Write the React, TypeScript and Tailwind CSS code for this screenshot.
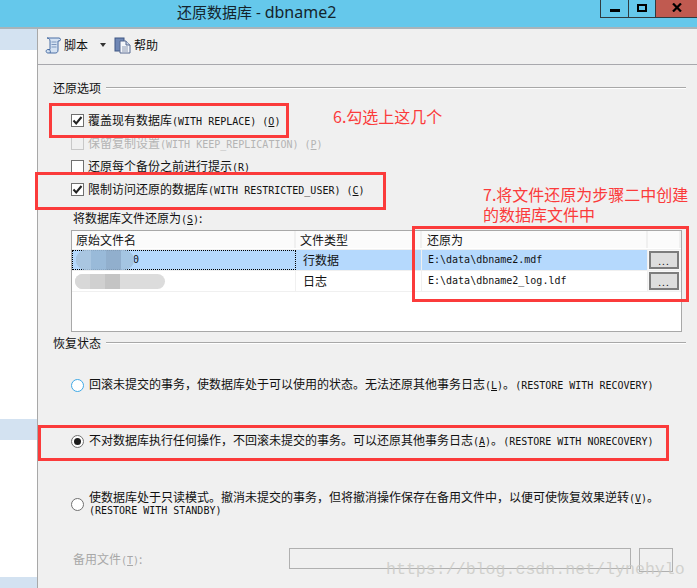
import React from "react";

const mono = "font-['DejaVu_Sans_Mono',monospace] text-[10px]";

const Latin = ({ children }: { children: React.ReactNode }) => (
  <span className={mono}>{children}</span>
);

const Key = ({ children }: { children: React.ReactNode }) => (
  <span className={mono}>
    (<span className="underline">{children}</span>)
  </span>
);

const CheckBox = ({ checked, disabled }: { checked?: boolean; disabled?: boolean }) => (
  <span
    className={`flex h-[13px] w-[13px] shrink-0 items-center justify-center border ${
      disabled ? "border-[#c8c8c8] bg-[#f0f0f0]" : "border-[#707070] bg-white"
    }`}
  >
    {checked && (
      <svg width="11" height="11" viewBox="0 0 11 11">
        <path d="M1.5 5.5 L4.2 8.5 L9.5 2" fill="none" stroke="#222" strokeWidth="2" />
      </svg>
    )}
  </span>
);

const Radio = ({ checked, blue }: { checked?: boolean; blue?: boolean }) => (
  <span
    className={`flex h-[13px] w-[13px] shrink-0 items-center justify-center rounded-full border bg-white ${
      blue ? "border-[#3fa9e6]" : "border-[#707070]"
    }`}
  >
    {checked && <span className="h-[7px] w-[7px] rounded-full bg-[#1c1c1c]" />}
  </span>
);

const SectionHead = ({ title }: { title: string }) => (
  <div className="flex h-4 items-center gap-[5px] pl-[15px] pr-[11px]">
    <span>{title}</span>
    <span className="h-[2px] flex-1 border-t border-b border-t-[#a8a8a8] border-b-white" />
  </div>
);

const OptionRow = ({
  children,
  checked,
  disabled,
}: {
  children: React.ReactNode;
  checked?: boolean;
  disabled?: boolean;
}) => (
  <div className={`flex h-[23px] items-center gap-[4px] pl-[33px] ${disabled ? "text-[#b4b4b4]" : ""}`}>
    <CheckBox checked={checked} disabled={disabled} />
    <span className="whitespace-nowrap">{children}</span>
  </div>
);

const DotsButton = () => (
  <div className="flex h-[18px] w-[30px] items-end justify-center border-2 border-[#7d7d7d] bg-[#dedede] pb-[1px] text-[10px] leading-[10px] tracking-[1px]">
    ...
  </div>
);

const HeaderCell = ({ className, children }: { className: string; children?: React.ReactNode }) => (
  <div className={`flex h-[17px] items-center border-r-2 border-[#f0f0f0] bg-[#fbfbfb] pl-[4px] ${className}`}>
    {children}
  </div>
);

const FileRow = ({
  selected,
  type,
  path,
  blur,
}: {
  selected?: boolean;
  type: string;
  path: string;
  blur: React.ReactNode;
}) => (
  <div className={`flex h-[21px] border-b border-[#f0f0f0] ${selected ? "bg-[#b5d9fd]" : "bg-white"}`}>
    <div
      className={`flex w-[224px] items-center border-r border-[#f0f0f0] pl-[3px] ${
        selected ? "border border-dotted border-black" : ""
      }`}
    >
      {blur}
    </div>
    <div className="flex w-[126px] items-center border-r border-[#f0f0f0] pl-[7px]">{type}</div>
    <div className="flex w-[226px] items-center border-r border-[#f0f0f0] pl-[6px] font-['DejaVu_Sans_Mono',monospace] text-[10px]">
      {path}
    </div>
    <div className="flex flex-1 items-center bg-[#f8f8f8] pl-[1px]">
      <DotsButton />
    </div>
  </div>
);

const ScriptIcon = () => (
  <svg width="17" height="17" viewBox="0 0 17 17">
    <path d="M2 1 H14 C16 1 16 4 14 4 H13 V13 C13 16 11 16 10 16 H3 C0.5 16 0.5 12.5 3 12.5 H5 V4 C5 2 3.5 1 2 1 Z" fill="#d5e2f2" stroke="#4a6fa5" />
    <path d="M6.5 5 H11.5 M6.5 7.5 H11.5 M6.5 10 H11.5" stroke="#7d97bd" />
    <path d="M3 12.5 C5 12.5 6 14.5 5 16" fill="none" stroke="#4a6fa5" />
  </svg>
);

const HelpIcon = () => (
  <svg width="17" height="17" viewBox="0 0 17 17">
    <rect x="1" y="1" width="9" height="13" fill="#6f87b5" stroke="#3f5684" />
    <path d="M6 4 H12 L16 8 V16 H6 Z" fill="#f4f6fa" stroke="#56698f" />
    <path d="M12 4 V8 H16" fill="#c9d4e6" stroke="#56698f" />
    <path d="M8 10 H14 M8 12 H14 M8 14 H14" stroke="#8d9ab3" />
  </svg>
);

const RedBox = ({ className }: { className: string }) => (
  <div className={`pointer-events-none absolute border-[3px] border-[#fb3b3b] ${className}`} />
);

export default function App() {
  return (
    <div className="relative h-[588px] w-[697px] overflow-hidden bg-[#f0f0f0] font-['Noto_Sans_CJK_SC',sans-serif] text-[12px] leading-4 text-[#111]">
      {/* title bar */}
      <div className="flex h-[29px] border-b-2 border-[#a8b4ba] bg-[#65c8eb]">
        <div className="flex-1 pl-[177px] pt-[2px] font-['Noto_Sans','Noto_Sans_CJK_SC',sans-serif] text-[15px] leading-[21px] text-[#14242c]">
          还原数据库 - <span className="text-[16px]">dbname2</span>
        </div>
        <div className="flex h-[18px] items-stretch border-b border-l border-[#2f3b40]">
          <div className="flex w-[28px] items-end justify-center border-r border-[#2f3b40] pb-[5px]">
            <span className="h-[3px] w-[10px] bg-black" />
          </div>
          <div className="flex w-[26px] items-start justify-center pt-[4px]">
            <span className="h-[8px] w-[10px] border-2 border-black" />
          </div>
          <div className="flex w-[42px] items-start justify-center border-l border-[#2f3b40] bg-[#c05a50] pt-[3px]">
            <svg width="10" height="9" viewBox="0 0 10 9">
              <path d="M1 0.5 L9 8.5 M9 0.5 L1 8.5" stroke="#000" strokeWidth="2.2" />
            </svg>
          </div>
        </div>
      </div>

      <div className="flex h-[559px]">
        {/* left pages list */}
        <div className="w-[37px] shrink-0 bg-white">
          <div className="h-[21px] bg-[#d3e2f1]" />
          <div className="mt-[369px] h-[21px] bg-[#d3e2f1]" />
          <div className="mt-[137px] h-[11px] bg-[#d3e2f1]" />
        </div>

        <div className="flex-1 border-l border-[#a8a8a8]">
          {/* toolbar */}
          <div className="flex h-[36px] items-center border-b border-[#a8a8ad] pb-[3px] pl-[7px] text-[12px]">
            <ScriptIcon />
            <span className="ml-[2px]">脚本</span>
            <span className="ml-[12px] h-0 w-0 border-x-[3.5px] border-t-[4px] border-x-transparent border-t-[#333]" />
            <span className="ml-[8px]">
              <HelpIcon />
            </span>
            <span className="ml-[3px]">帮助</span>
          </div>

          <div className="mt-[15px]">
            <SectionHead title="还原选项" />
          </div>
          <div className="mt-[13px]">
            <OptionRow checked>
              覆盖现有数据库<Latin>(WITH REPLACE) </Latin>
              <Key>O</Key>
            </OptionRow>
            <OptionRow disabled>
              保留复制设置<Latin>(WITH KEEP_REPLICATION) </Latin>
              <Key>P</Key>
            </OptionRow>
            <OptionRow>
              还原每个备份之前进行提示<Key>R</Key>
            </OptionRow>
            <OptionRow checked>
              限制访问还原的数据库<Latin>(WITH RESTRICTED_USER) </Latin>
              <Key>C</Key>
            </OptionRow>
          </div>

          <div className="mt-[9px] h-4 pl-[35px]">
            将数据库文件还原为<Key>S</Key>:
          </div>

          {/* file table */}
          <div className="ml-[33px] mt-[4px] h-[102px] w-[611px] border border-[#a8a8a8] bg-white">
            <div className="flex border-b border-[#f0f0f0] pb-[1px]">
              <HeaderCell className="w-[224px]">原始文件名</HeaderCell>
              <HeaderCell className="w-[126px]">文件类型</HeaderCell>
              <HeaderCell className="w-[226px] pl-[5px]">还原为</HeaderCell>
              <HeaderCell className="flex-1" />
            </div>
            <FileRow
              selected
              type="行数据"
              path="E:\data\dbname2.mdf"
              blur={
                <div className="flex w-full items-center">
                  <div className="flex h-[20px] w-[58px] overflow-hidden rounded-full bg-[#a3c3e0] opacity-90">
                    <span className="w-[15px] bg-[#a8c4de]" />
                    <span className="w-[15px] bg-[#97b7d6]" />
                    <span className="w-[15px] bg-[#8eabc8]" />
                  </div>
                  <span className="-ml-[1px] font-['DejaVu_Sans_Mono',monospace] text-[10px]">0</span>
                </div>
              }
            />
            <FileRow
              type="日志"
              path="E:\data\dbname2_log.ldf"
              blur={
                <div className="flex h-[15px] w-[90px] overflow-hidden rounded-full bg-[#dcdcdc]">
                  <span className="w-[15px] bg-[#d8d8d8]" />
                  <span className="w-[15px] bg-[#d0d0d0]" />
                  <span className="w-[15px] bg-[#c4c4c4]" />
                </div>
              }
            />
          </div>

          <div className="mt-[3px]">
            <SectionHead title="恢复状态" />
          </div>

          <div className="mt-[26px] flex h-4 items-center gap-[5px] pl-[33px]">
            <Radio blue />
            <span className="whitespace-nowrap">
              回滚未提交的事务，使数据库处于可以使用的状态。无法还原其他事务日志<Key>L</Key>。
              <Latin>(RESTORE WITH RECOVERY)</Latin>
            </span>
          </div>
          <div className="mt-[40px] flex h-4 items-center gap-[5px] pl-[33px]">
            <Radio checked />
            <span className="whitespace-nowrap">
              不对数据库执行任何操作，不回滚未提交的事务。可以还原其他事务日志<Key>A</Key>。
              <Latin>(RESTORE WITH NORECOVERY)</Latin>
            </span>
          </div>
          <div className="mt-[43px] flex h-6 items-center gap-[5px] pl-[33px]">
            <Radio />
            <div className="whitespace-nowrap leading-3">
              <div>
                使数据库处于只读模式。撤消未提交的事务，但将撤消操作保存在备用文件中，以便可使恢复效果逆转<Key>V</Key>。
              </div>
              <div className={mono}>(RESTORE WITH STANDBY)</div>
            </div>
          </div>

          <div className="mt-[32px] flex items-start pl-[35px] text-[#a8a8a8]">
            <span className="mt-[3px] w-[216px]">
              备用文件<Key>T</Key>:
            </span>
            <div className="h-[21px] w-[342px] border border-[#b0b0b0]" />
            <div className="ml-[8px] h-[24px] w-[34px] border border-[#b0b0b0]" />
          </div>
        </div>
      </div>

      {/* annotations drawn over the dialog */}
      <RedBox className="left-[49px] top-[103px] h-[35px] w-[240px]" />
      <RedBox className="left-[35px] top-[172px] h-[38px] w-[351px]" />
      <RedBox className="left-[412px] top-[226px] h-[76px] w-[277px]" />
      <RedBox className="left-[38px] top-[425px] h-[36px] w-[631px]" />
      <div className="absolute left-[333px] top-[105px] text-[16px] leading-[22px] text-[#fb3b3b]">6.勾选上这几个</div>
      <div className="absolute left-[483px] top-[184px] w-[210px] text-[16px] leading-[20px] text-[#fb3b3b]">
        7.将文件还原为步骤二中创建的数据库文件中
      </div>
      <div className="absolute left-[386px] top-[559px] font-['Liberation_Mono',monospace] text-[16.6px] leading-[22px] text-[#c9c9c4]/80">
        https://blog.csdn.net/lynehylo
      </div>
    </div>
  );
}
